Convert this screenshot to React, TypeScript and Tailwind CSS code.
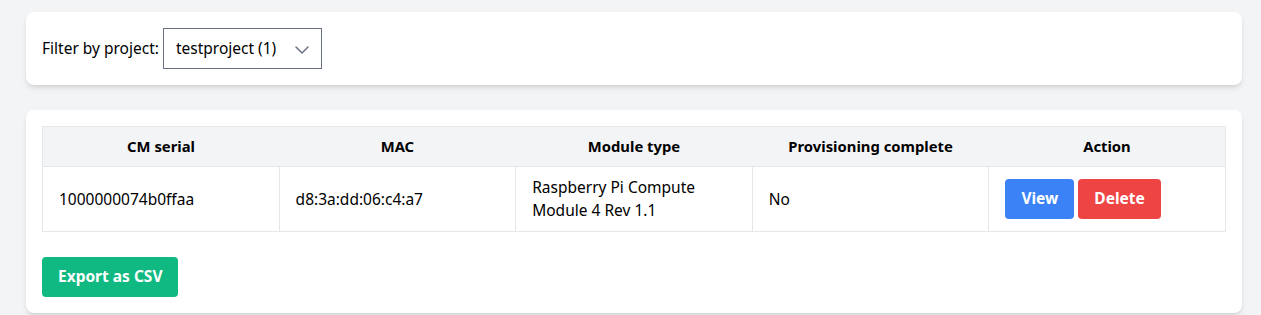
const rows = [
  {
    serial: '1000000074b0ffaa',
    mac: 'd8:3a:dd:06:c4:a7',
    module: 'Raspberry Pi Compute Module 4 Rev 1.1',
    done: 'No',
  },
];

const headers = ['CM serial', 'MAC', 'Module type', 'Provisioning complete', 'Action'];

export default function App() {
  return (
    <div
      className="min-h-[315px] bg-[#f3f4f6] pl-[26px] pr-[19px] pt-3 text-[15.5px] text-black"
      style={{ fontFamily: '"Noto Sans", "Open Sans", sans-serif' }}
    >
      <div className="rounded-lg bg-white px-4 py-4 shadow-md">
        <div className="flex items-center gap-1">
          <label>Filter by project:</label>
          <div className="relative flex h-[41px] w-[159px] items-center border border-gray-500 pl-3 pr-3">
            <span>testproject (1)</span>
            <svg
              className="absolute right-[9px] top-1/2 -mt-[10px] h-5 w-5 text-gray-500"
              viewBox="0 0 20 20"
              fill="none"
              stroke="currentColor"
              strokeWidth="1.5"
              strokeLinecap="round"
              strokeLinejoin="round"
            >
              <path d="M4 8l6 6 6-6" />
            </svg>
          </div>
        </div>
      </div>

      <div className="mt-[25px] rounded-lg bg-white p-4 shadow-md">
        <table className="w-full table-fixed border-collapse border border-gray-200">
          <thead>
            <tr className="h-10 bg-[#f3f4f6]">
              {headers.map((h) => (
                <th key={h} className="px-4 text-center text-[14.8px] font-bold">
                  {h}
                </th>
              ))}
            </tr>
          </thead>
          <tbody>
            {rows.map((r) => (
              <tr key={r.serial} className="h-[65px]">
                <td className="border border-gray-200 px-4 leading-[23px]">{r.serial}</td>
                <td className="border border-gray-200 px-4 leading-[23px]">{r.mac}</td>
                <td className="border border-gray-200 px-4 leading-[23px]">{r.module}</td>
                <td className="border border-gray-200 px-4 leading-[23px]">{r.done}</td>
                <td className="border border-gray-200 px-4">
                  <div className="flex gap-1">
                    <button className="h-10 rounded bg-[#3b82f6] px-4 font-bold text-white">View</button>
                    <button className="h-10 rounded bg-[#ef4444] px-4 font-bold text-white">Delete</button>
                  </div>
                </td>
              </tr>
            ))}
          </tbody>
        </table>
        <button className="mt-[25px] h-10 rounded bg-[#10b981] px-4 font-bold text-white">
          Export as CSV
        </button>
      </div>
    </div>
  );
}
